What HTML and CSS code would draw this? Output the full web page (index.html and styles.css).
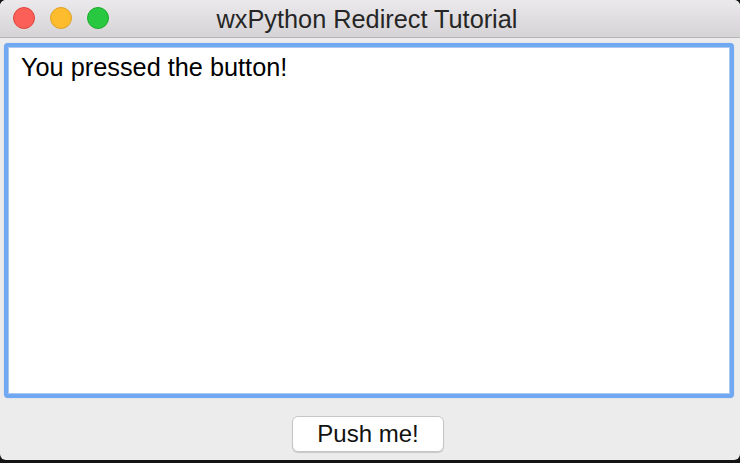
FILE: index.html
```html
<!DOCTYPE html>
<html>
<head>
<meta charset="utf-8">
<link rel="stylesheet" href="styles.css">
</head>
<body>
<div class="window">
  <div class="titlebar">
    <div class="lights">
      <span class="light red"></span>
      <span class="light yellow"></span>
      <span class="light green"></span>
    </div>
    <div class="title">wxPython Redirect Tutorial</div>
  </div>
  <div class="content">
    <div class="textarea">
      <div class="textinner">You pressed the button!</div>
    </div>
    <div class="buttonrow">
      <button class="btn">Push me!</button>
    </div>
  </div>
</div>
</body>
</html>
```
FILE: styles.css
```css
html, body {
  margin: 0;
  padding: 0;
  background: #141414;
  width: 740px;
  height: 463px;
  overflow: hidden;
  font-family: "Liberation Sans", Arial, sans-serif;
}
.window {
  width: 740px;
  height: 460px;
  background: #ececec;
  border-radius: 6px;
  overflow: hidden;
  display: flex;
  flex-direction: column;
}
.titlebar {
  position: relative;
  height: 37px;
  background: linear-gradient(#ebe9eb, #d5d3d5);
  border-bottom: 1px solid #b5b5b5;
  display: flex;
  align-items: center;
  justify-content: center;
  flex-shrink: 0;
}
.lights {
  position: absolute;
  left: 13px;
  top: 7px;
  display: flex;
  gap: 15px;
}
.light {
  width: 22px;
  height: 22px;
  border-radius: 50%;
  box-sizing: border-box;
}
.red { background: #fc5f57; border: 1px solid #e0443e; }
.yellow { background: #fdbc2e; border: 1px solid #dea123; }
.green { background: #28c840; border: 1px solid #1aab29; }
.title {
  font-size: 25.3px;
  color: #262626;
  line-height: 30px;
  margin-top: 1px;
  margin-right: 6px;
}
.content {
  flex: 1;
  display: flex;
  flex-direction: column;
  padding: 5px 6px 0 4px;
}
.textarea {
  height: 355px;
  box-sizing: border-box;
  border: 4px solid #70a8f2;
  border-radius: 4px;
  background: #fff;
  box-shadow: 0 0 1px 0 #9cc3f6;
}
.textinner {
  height: 100%;
  box-sizing: border-box;
  border: 1px solid #a9c8ee;
  padding: 4px 12px;
  font-size: 25.3px;
  line-height: 30px;
  color: #000;
}
.buttonrow {
  display: flex;
  justify-content: center;
  padding-top: 18px;
}
.btn {
  width: 152px;
  height: 36px;
  margin-right: 2px;
  background: #fff;
  border: 1px solid #c6c6c6;
  border-radius: 6px;
  box-shadow: 0 1px 1px rgba(0,0,0,0.15);
  font-family: "Liberation Sans", Arial, sans-serif;
  font-size: 24px;
  color: #111;
  padding: 0;
  line-height: 34px;
}
```
